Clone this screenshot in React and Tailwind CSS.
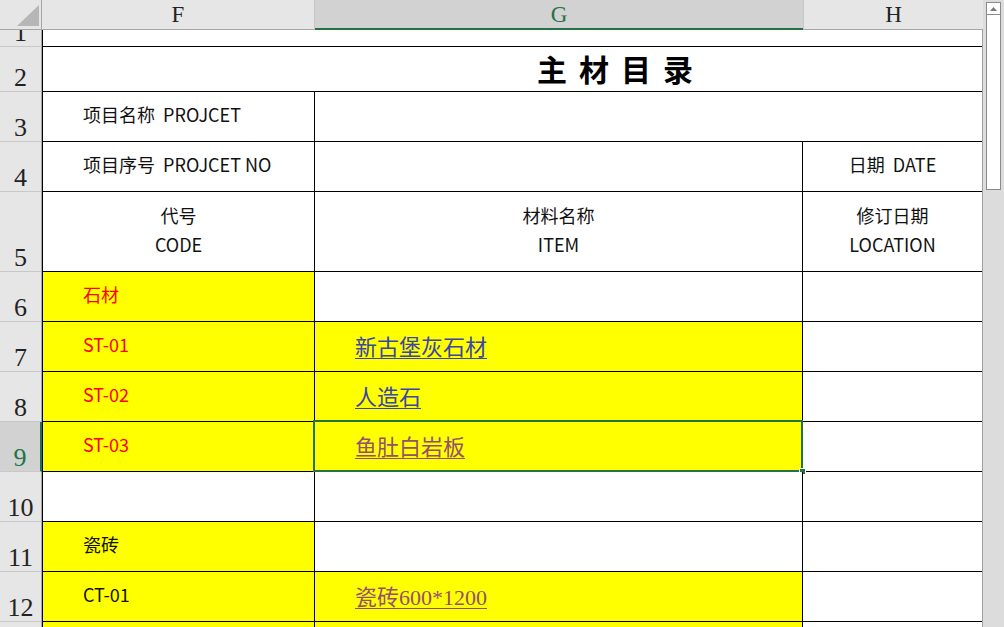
const SANS = "font-['Noto_Sans_CJK_SC',sans-serif]"
const LINK = "font-['Liberation_Serif','Noto_Sans_CJK_SC',serif] text-[22px] underline decoration-1 underline-offset-[3px]"

function RowHead({ n, active }) {
  return (
    <div
      className={`flex w-[42px] shrink-0 items-end justify-center overflow-hidden border-b border-b-[#c8c8c8] font-['Liberation_Serif',serif] text-[26px] leading-none ${
        active
          ? 'border-r-2 border-r-[#217346] bg-[#d2d2d2] text-[#217346]'
          : 'border-r border-r-[#a6a6a6] bg-[#e6e6e6] text-[#222]'
      }`}
    >
      {n}
    </div>
  )
}

function Cell({ w, yellow, children, center, className = '' }) {
  return (
    <div
      className={`flex h-full items-center border-r border-black ${w} ${yellow ? 'bg-[#ffff00]' : 'bg-white'} ${
        center ? 'justify-center text-center' : 'pl-[40px]'
      } ${className}`}
    >
      {children}
    </div>
  )
}

function Row({ n, h = 'h-[50px]', active, children }) {
  return (
    <div className={`flex shrink-0 ${h}`}>
      <RowHead n={n} active={active} />
      <div className={`flex flex-1 border-b border-l border-black ${SANS} text-[18px] text-[#111]`}>{children}</div>
    </div>
  )
}

function DataRow({ n, code, codeRed, yellowItem, item, visited, active }) {
  return (
    <Row n={n} active={active}>
      <Cell w="w-[272px]" yellow={code !== null}>
        <span className={`relative -top-[2px] ${codeRed ? 'text-[#ff0000]' : ''}`}>{code}</span>
      </Cell>
      <Cell w="w-[488px]" yellow={yellowItem} className="relative">
        {item && (
          <span className={`${LINK} pt-[2px] ${visited ? 'text-[#954f72]' : 'text-[#3a46a8]'}`}>{item}</span>
        )}
        {active && (
          <>
            <div className="absolute -top-[2px] -left-[2px] -right-[1px] -bottom-[1px] border-2 border-[#217346]" />
            <div className="absolute -right-[4px] -bottom-[4px] h-[7px] w-[7px] border border-white bg-[#217346]" />
          </>
        )}
      </Cell>
      <div className="flex-1 bg-white" />
    </Row>
  )
}

export default function App() {
  return (
    <div className="flex h-[627px] w-[1004px] overflow-hidden bg-white">
      <div className="flex w-[983px] shrink-0 flex-col">
        {/* column headers */}
        <div className="flex h-[30px] shrink-0 bg-[#e6e6e6] font-['Liberation_Serif',serif] text-[23px] leading-none text-[#222]">
          <div className="relative w-[42px] border-b border-r border-[#a6a6a6]">
            <svg className="absolute left-0 top-0" width="42" height="29">
              <path d="M17 26 L39 26 L39 5 Z" fill="#b6b6b6" />
            </svg>
          </div>
          <div className="flex w-[273px] items-end justify-center border-b border-r border-b-[#a6a6a6] border-r-[#c6c6c6] pb-[3px]">F</div>
          <div className="flex w-[488px] items-end justify-center border-b-2 border-[#217346] bg-[#d2d2d2] pb-[2px] text-[#217346]">G</div>
          <div className="flex flex-1 items-end justify-center border-b border-l border-b-[#a6a6a6] border-l-[#c6c6c6] pb-[3px]">H</div>
        </div>

        <div className="flex flex-1 flex-col overflow-hidden border-r border-[#9f9f9f]">
          <Row n={1} h="h-[17px]">
            <div className="flex-1" />
          </Row>
          <Row n={2} h="h-[45px]">
            <div className="flex flex-1 items-center pl-[494px] text-[30px] font-bold tracking-[12px] text-black">
              <span className="relative -top-[1px]">主材目录</span>
            </div>
          </Row>
          <Row n={3}>
            <Cell w="w-[272px]">
              <span className="relative -top-[2px] whitespace-pre">项目名称  PROJCET</span>
            </Cell>
            <div className="flex-1" />
          </Row>
          <Row n={4}>
            <Cell w="w-[272px]">
              <span className="relative -top-[2px] whitespace-pre">项目序号  PROJCET NO</span>
            </Cell>
            <Cell w="w-[488px]" />
            <div className="flex flex-1 items-center justify-center">
              <span className="relative -top-[2px] whitespace-pre">日期  DATE</span>
            </div>
          </Row>
          <Row n={5} h="h-[80px]">
            <Cell w="w-[272px]" center className="leading-[29px]">
              <span className="relative -top-[2px]">代号<br />CODE</span>
            </Cell>
            <Cell w="w-[488px]" center className="leading-[29px]">
              <span className="relative -top-[2px]">材料名称<br />ITEM</span>
            </Cell>
            <div className="flex flex-1 items-center justify-center text-center leading-[29px]">
              <span className="relative -top-[2px]">修订日期<br />LOCATION</span>
            </div>
          </Row>
          <DataRow n={6} code="石材" codeRed />
          <DataRow n={7} code="ST-01" codeRed yellowItem item="新古堡灰石材" />
          <DataRow n={8} code="ST-02" codeRed yellowItem item="人造石" />
          <DataRow n={9} code="ST-03" codeRed yellowItem item="鱼肚白岩板" visited active />
          <DataRow n={10} code={null} />
          <DataRow n={11} code="瓷砖" />
          <DataRow n={12} code="CT-01" yellowItem item="瓷砖600*1200" visited />
          <DataRow n={13} code="" yellowItem />
        </div>
      </div>

      {/* vertical scrollbar */}
      <div className="w-[21px] shrink-0 bg-[#dcdcdc] pl-[3px] pt-[2px]">
        <div className="h-[188px] w-[15px] border border-[#8a8a8a] bg-white">
          <div className="flex h-[12px] items-center justify-center border-b border-[#8a8a8a]">
            <svg width="7" height="4">
              <path d="M0 4 L3.5 0 L7 4 Z" fill="#7a7a7a" />
            </svg>
          </div>
        </div>
      </div>
    </div>
  )
}
